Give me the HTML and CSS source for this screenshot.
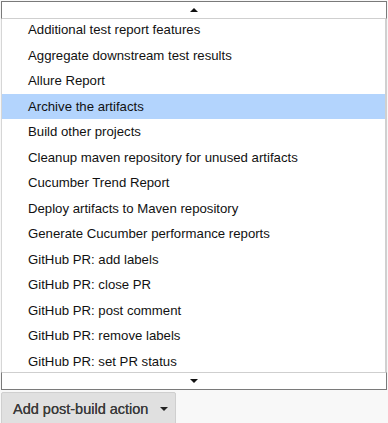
FILE: index.html
```html
<!DOCTYPE html>
<html lang="en">
<head>
    <meta charset="UTF-8">
    <title>Add post-build action</title>
    <link rel="stylesheet" href="styles.css">
</head>
<body>
    <div class="menu">
        <div class="scroll-arrow up"><span class="tri-up"></span></div>
        <div class="list">
            <ul class="items">
                <li>Additional test report features</li>
                <li>Aggregate downstream test results</li>
                <li>Allure Report</li>
                <li class="active">Archive the artifacts</li>
                <li>Build other projects</li>
                <li>Cleanup maven repository for unused artifacts</li>
                <li>Cucumber Trend Report</li>
                <li>Deploy artifacts to Maven repository</li>
                <li>Generate Cucumber performance reports</li>
                <li>GitHub PR: add labels</li>
                <li>GitHub PR: close PR</li>
                <li>GitHub PR: post comment</li>
                <li>GitHub PR: remove labels</li>
                <li>GitHub PR: set PR status</li>
            </ul>
        </div>
        <div class="scroll-arrow down"><span class="tri-down"></span></div>
    </div>

    <button class="action-btn">Add post-build action <span class="caret"></span></button>
</body>
</html>
```

FILE: styles.css
```css
body {
    margin: 0;
    background: #f8f8f8;
    font-family: "Liberation Sans", Arial, sans-serif;
    height: 423px;
    overflow: hidden;
}
.menu {
    margin: 1px 0 0 1px;
    width: 386px;
}
.scroll-arrow {
    height: 16px;
    background: #fff;
    border: 1px solid #7a7a7a;
    display: flex;
    align-items: center;
    justify-content: center;
}
.scroll-arrow.up {
    border-bottom: 1px solid #cfcfcf;
}
.scroll-arrow.down {
    border-top: 1px solid #cfcfcf;
}
.tri-up, .tri-down {
    width: 0;
    height: 0;
    border-left: 4px solid transparent;
    border-right: 4px solid transparent;
}
.tri-up {
    border-bottom: 4px solid #111;
}
.tri-down {
    border-top: 4px solid #111;
}
.list {
    height: 353px;
    overflow: hidden;
    background: #fff;
    border-left: 1px solid #d6d6d6;
    border-right: 2px solid #d0d0d0;
}
.items {
    list-style: none;
    margin: -2px 0 0 0;
    padding: 0;
}
.items li {
    height: 25.5px;
    line-height: 25.5px;
    padding-left: 26px;
    font-size: 13.2px;
    color: #111;
    white-space: nowrap;
}
.items li.active {
    background: #b3d4fd;
}
.action-btn {
    margin: 2px 0 0 1px;
    width: 175px;
    height: 34px;
    background: #e0e0e0;
    border: 1px solid #cfcfcf;
    border-radius: 2px;
    padding: 0 0 0 11px;
    font-family: "Liberation Sans", Arial, sans-serif;
    font-size: 14.5px;
    color: #3a3a3a;
    text-align: left;
    white-space: nowrap;
    display: flex;
    align-items: center;
    text-shadow: 0 0 0.4px #3a3a3a;
}
.caret {
    display: inline-block;
    margin-left: 12px;
    border-left: 4px solid transparent;
    border-right: 4px solid transparent;
    border-top: 4px solid #222;
}
```
